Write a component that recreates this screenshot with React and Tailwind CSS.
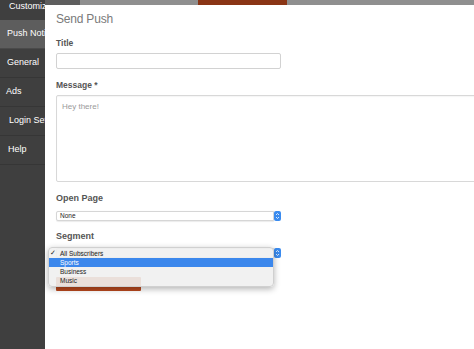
function Stepper() {
  return (
    <div className="w-[7px] h-[10px] rounded-[2px] bg-[#3a8bef] flex items-center justify-center shrink-0">
      <svg width="5" height="8" viewBox="0 0 5 8" fill="none">
        <path d="M1 3 L2.5 1.5 L4 3" stroke="white" strokeWidth="0.8" />
        <path d="M1 5 L2.5 6.5 L4 5" stroke="white" strokeWidth="0.8" />
      </svg>
    </div>
  );
}

function MacSelect({ value, children }) {
  return (
    <div className="relative w-[225px] h-[10px] flex items-stretch">
      <div className="flex-1 bg-white border border-[#d6d6d6] rounded-l-[2px] shadow-[0_0.5px_1px_rgba(0,0,0,0.08)] flex items-center pl-[3px] text-[6.5px] leading-none text-[#222]">
        {value}
      </div>
      <Stepper />
      {children}
    </div>
  );
}

export default function App() {
  const rows = ["General", "Ads", "Login Settings", "Help"];
  return (
    <div className="w-[474px] h-[349px] overflow-hidden flex bg-white font-['Liberation_Sans',Arial,sans-serif]">
      <aside className="w-[45px] shrink-0 bg-[#3f3f3f] overflow-hidden text-white text-[9px]">
        <div className="h-[20px] pl-[9px] pt-[1px] leading-[10px] whitespace-nowrap">Customize</div>
        <div className="h-[29px] pl-[7px] flex items-center whitespace-nowrap bg-[#5d5d5d] border-b border-[#4a4a4a]">
          Push Notifications
        </div>
        {rows.map((r, i) => (
          <div
            key={r}
            className={`h-[29px] flex items-center whitespace-nowrap border-b border-[#363636] ${
              i === 0 ? "pl-[7px]" : i === 1 ? "pl-[6px]" : i === 2 ? "pl-[9px]" : "pl-[8px]"
            }`}
          >
            {r}
          </div>
        ))}
      </aside>
      <div className="flex-1 flex flex-col min-w-0">
        <div className="h-[5px] flex shrink-0">
          <div className="w-[35px] bg-[#5e5e5e]" />
          <div className="w-[118px] bg-[#8f8f8f]" />
          <div className="w-[89px] bg-[#8a3515]" />
          <div className="flex-1 bg-[#8f8f8f]" />
        </div>
        <div className="flex-1 bg-white pl-[11px] flex flex-col items-start">
          <div className="mt-[6px] h-[16px] text-[12px] leading-[16px] text-[#7a7a7a] tracking-[-0.2px]">Send Push</div>

          <div className="mt-[10px] h-[12px] text-[8.5px] leading-[12px] font-bold text-[#555]">Title</div>
          <div className="mt-[4px] w-[225px] h-[16px] border border-[#d2d2d2] rounded-[2px] bg-white" />

          <div className="mt-[10px] h-[12px] text-[8.5px] leading-[12px] font-bold text-[#555]">Message *</div>
          <div className="mt-[4px] w-[430px] h-[87px] border border-[#d8d8d8] rounded-[2px] bg-white pl-[5px] pt-[5px] text-[8px] text-[#9a9a9a] shadow-[inset_0_1px_1px_rgba(0,0,0,0.04)]">
            Hey there!
          </div>

          <div className="mt-[10px] h-[12px] text-[9px] leading-[12px] font-bold text-[#555]">Open Page</div>
          <div className="mt-[7px]">
            <MacSelect value="None" />
          </div>

          <div className="mt-[9px] h-[12px] text-[9px] leading-[12px] font-bold text-[#555]">Segment</div>
          <div className="mt-[6px] relative z-10">
            <MacSelect value="All Subscribers">
              <div className="absolute left-[-8px] top-[-1px] w-[226px] h-[40px] rounded-[4px] bg-[rgba(240,240,240,0.9)] shadow-[0_2px_6px_rgba(0,0,0,0.3)] border border-[#d0d0d0] pt-[1px] text-[6.5px] text-[#222]">
                <div className="h-[9px] flex items-center">
                  <span className="w-[11px] pl-[1px] text-[7px]">✓</span>
                  <span>All Subscribers</span>
                </div>
                <div className="h-[9px] flex items-center bg-[#3b87ec] text-white">
                  <span className="w-[11px]" />
                  <span>Sports</span>
                </div>
                <div className="h-[9px] flex items-center">
                  <span className="w-[11px]" />
                  <span>Business</span>
                </div>
                <div className="h-[9px] flex items-center">
                  <span className="w-[11px]" />
                  <span>Music</span>
                </div>
              </div>
            </MacSelect>
          </div>

          <div className="mt-[19px] w-[85px] h-[14px] bg-[#b8481d] rounded-[1px]" />
        </div>
      </div>
    </div>
  );
}
